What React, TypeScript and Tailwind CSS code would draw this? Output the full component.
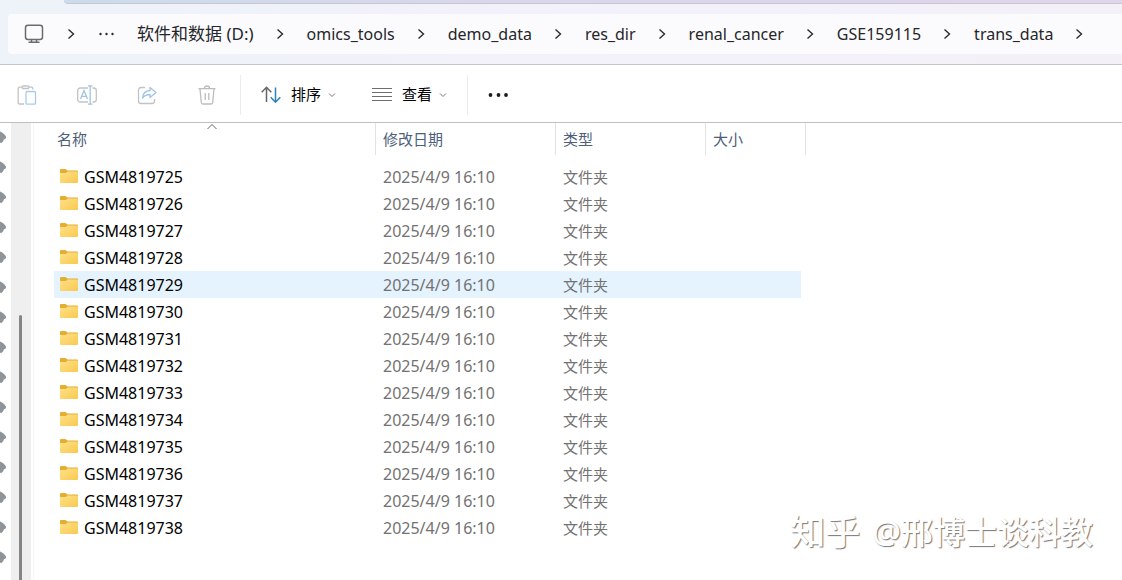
import { useState } from 'react';

const crumbs = ['软件和数据 (D:)', 'omics_tools', 'demo_data', 'res_dir', 'renal_cancer', 'GSE159115', 'trans_data'];

const folders = Array.from({ length: 14 }, (_, i) => ({
  name: `GSM${4819725 + i}`,
  date: '2025/4/9 16:10',
  type: '文件夹',
}));

const pins = Array.from({ length: 15 }, (_, i) => i);

function Chevron() {
  return (
    <svg className="h-3 w-2 shrink-0" viewBox="0 0 8 12" fill="none" stroke="#2b2b2e" strokeWidth="1.4">
      <path d="M1.5 1.5 6.5 6l-5 4.5" />
    </svg>
  );
}

function SmallChevron() {
  return (
    <svg className="h-2 w-2" viewBox="0 0 8 8" fill="none" stroke="#7a7a7a" strokeWidth="1">
      <path d="M1 2.5 4 5.5l3-3" />
    </svg>
  );
}

function PcIcon() {
  return (
    <svg className="h-5 w-5" viewBox="0 0 20 20" fill="none" stroke="#6a6c70" strokeWidth="1.5">
      <rect x="1.5" y="1.2" width="17" height="14.3" rx="2.5" />
      <path d="M7.5 15.5v2.7M12.5 15.5v2.7M4.5 18.2h11" />
    </svg>
  );
}

function PasteIcon() {
  return (
    <svg className="h-5 w-5" viewBox="0 0 20 20" fill="none" strokeWidth="1.3">
      <path d="M7 19H2.5a1.3 1.3 0 0 1-1.3-1.3V3.500a1.300 1.300 0 0 1 1.300-1.300H5M12 2.200h2.500a1.300 1.300 0 0 1 1.300 1.300V4.500" stroke="#c3c3c3" />
      <rect x="5" y="1" width="7" height="2.500" rx="1.200" stroke="#c3c3c3" />
      <rect x="9" y="6.500" width="9.500" height="12.700" rx="1.300" stroke="#a9cbe6" />
    </svg>
  );
}

function RenameIcon() {
  return (
    <svg className="h-5 w-5" viewBox="0 0 20 20" fill="none" strokeWidth="1.3">
      <path d="M11 17H3.200A2.500 2.500 0 0 1 .7 14.500v-9A2.500 2.500 0 0 1 3.200 3H11M15.500 3h1.300a2.500 2.500 0 0 1 2.500 2.500v9a2.500 2.500 0 0 1-2.500 2.500h-1.300" stroke="#c3c3c3" />
      <path d="m3.500 14 3.500-8.500L10.500 14M4.700 11.300h4.600M13.200.8v18.400M11 .8h4.400M11 19.200h4.400" stroke="#a0c4e2" />
    </svg>
  );
}

function ShareIcon() {
  return (
    <svg className="h-5 w-5" viewBox="0 0 20 20" fill="none" strokeWidth="1.3" strokeLinejoin="round">
      <path d="M8 2.500H4A2.500 2.500 0 0 0 1.500 5v11A2.500 2.500 0 0 0 4 18.500h11a2.500 2.500 0 0 0 2.500-2.500v-2" stroke="#c3c3c3" />
      <path d="M13 2.500 19 7.500l-6 5v-3c-3.500 0-5.500 1-7.500 3.500.3-4.500 3-7.200 7.500-7.500z" stroke="#a0c4e2" />
    </svg>
  );
}

function TrashIcon() {
  return (
    <svg className="h-5 w-5" viewBox="0 0 20 20" fill="none" stroke="#bdbdbd" strokeWidth="1.3">
      <path d="M1.500 3.700h17M7.500 3.500a2.500 2.500 0 0 1 5 0M3 4l1.300 13.500a1.700 1.700 0 0 0 1.700 1.500h8a1.700 1.700 0 0 0 1.700-1.500L17 4M8.200 8v7M11.800 8v7" />
    </svg>
  );
}

function SortIcon() {
  return (
    <svg className="h-5 w-5" viewBox="0 0 20 20" fill="none" strokeWidth="1.5">
      <path d="M5.500 17V2.500M.7 7.300l4.800-5 4.800 5" stroke="#666" />
      <path d="M14.500 2.500V17M9.700 12.200l4.800 5 4.800-5" stroke="#2b83bd" />
    </svg>
  );
}

function ViewIcon() {
  return (
    <svg className="h-5 w-5" viewBox="0 0 20 20" fill="none" stroke="#6f6f6f" strokeWidth="1.2">
      <path d="M0 3.500h20M0 7.500h20M0 11.500h20M0 15.500h20" />
    </svg>
  );
}

function FolderIcon() {
  return (
    <svg className="h-4 w-[18px] shrink-0" viewBox="0 0 18 16">
      <defs>
        <linearGradient id="folder" x1="0" y1="0" x2="1" y2="1">
          <stop offset="0" stopColor="#ffe18a" />
          <stop offset="1" stopColor="#f8c94e" />
        </linearGradient>
      </defs>
      <path d="M0 1a1 1 0 0 1 1-1h4.500L7.500 1.500H17a1 1 0 0 1 1 1V8H0z" fill="#e4ae33" />
      <path d="M0 4h6l1.500-1.500H17a1 1 0 0 1 1 1V13a1 1 0 0 1-1 1H1a1 1 0 0 1-1-1z" fill="url(#folder)" />
    </svg>
  );
}

function PinIcon() {
  return (
    <svg className="h-3.5 w-1.5" viewBox="0 0 6 14" fill="#8f9499">
      <path d="M0 .5C2 1 4.500 3 6 5.500L5.800 7.500 4 8.200 3 10.500 1 12.200 0 11.500z" />
    </svg>
  );
}

export default function App() {
  const [selected, setSelected] = useState('GSM4819729');

  return (
    <div className="relative flex h-screen flex-col overflow-hidden bg-white font-['Noto_Sans','Noto_Sans_CJK_SC',sans-serif] text-base text-black">
      {/* Title strip and address bar */}
      <header className="shrink-0 border-b border-[#c4c5cc] bg-linear-to-r from-[#edf3f9] via-[#f3f1f9] to-[#f3f0f8]">
        <div className="ml-16 h-1 rounded-bl border-b border-[#c8c6d6] bg-linear-to-r from-[#cbdcea] via-[#dcd6ea] to-[#ded6ea]" />
        <div className="py-2.5 pl-2">
          <nav className="flex h-10 items-center gap-[23px] rounded-l bg-[#fbfbfe] pl-4 whitespace-nowrap text-[#262629]">
            <button aria-label="PC"><PcIcon /></button>
            <Chevron />
            <button aria-label="More locations">
              <svg className="h-4 w-4" viewBox="0 0 16 16" fill="#2b2b2e">
                <circle cx="2.500" cy="8" r="1.200" />
                <circle cx="8.500" cy="8" r="1.200" />
                <circle cx="14.500" cy="8" r="1.200" />
              </svg>
            </button>
            {crumbs.map((crumb, i) => (
              <div key={crumb} className="flex items-center gap-[22px]">
                <button className={i === 0 ? 'text-[17px]' : 'text-base'}>{crumb}</button>
                <Chevron />
              </div>
            ))}
          </nav>
        </div>
      </header>

      {/* Toolbar */}
      <div className="flex h-[58px] shrink-0 items-center border-b border-[#bfc0c2] pt-0.5 pl-[17px] text-[15px]">
        <div className="flex gap-10 pr-[23px]">
          <button aria-label="Paste" disabled><PasteIcon /></button>
          <button aria-label="Rename" disabled><RenameIcon /></button>
          <button aria-label="Share" disabled><ShareIcon /></button>
          <button aria-label="Delete" disabled><TrashIcon /></button>
        </div>
        <div className="flex h-10 items-center gap-9 border-x border-[#ececec] px-5">
          <button className="flex items-center gap-2.5">
            <SortIcon />
            <span className="flex items-center gap-[7px]">排序<SmallChevron /></span>
          </button>
          <button className="flex items-center gap-2.5">
            <ViewIcon />
            <span className="flex items-center gap-[7px]">查看<SmallChevron /></span>
          </button>
        </div>
        <button aria-label="See more" className="ml-5">
          <svg className="h-5 w-5" viewBox="0 0 20 20" fill="#1b1b1b">
            <circle cx="2.500" cy="10" r="1.900" />
            <circle cx="10.500" cy="10" r="1.900" />
            <circle cx="18" cy="10" r="1.900" />
          </svg>
        </button>
      </div>

      <div className="flex min-h-0 flex-1">
        {/* Navigation pane edge */}
        <aside className="flex shrink-0 overflow-hidden border-r border-[#f5f5f5] pr-0.5">
          <div className="flex w-[11px] flex-col gap-4 pt-2">
            {pins.map((pin) => (
              <PinIcon key={pin} />
            ))}
          </div>
          <div className="flex w-5 flex-col bg-[#efefef] pl-2">
            <div className="h-[42%] shrink-0" />
            <div className="w-[3px] flex-1 rounded-t bg-[#858585]" />
          </div>
        </aside>

        <main className="min-w-0 flex-1 overflow-hidden pl-5">
          <table className="w-[752px] table-fixed border-collapse text-left">
            <colgroup>
              <col className="w-[322px]" />
              <col className="w-[180px]" />
              <col className="w-[150px]" />
              <col className="w-[95px]" />
              <col className="w-[5px]" />
            </colgroup>
            <thead className="text-[15px] text-[#4c607a]">
              <tr className="h-10 align-top">
                <th className="relative p-0 font-normal">
                  <div className="h-8 border-r border-[#e2e2e2] pl-[3px] leading-8">名称</div>
                  <svg className="absolute top-0 left-[153px] h-2 w-2.5" viewBox="0 0 10 8" fill="none" stroke="#666">
                    <path d="m.5 6 4.500-4.500L9.500 6" />
                  </svg>
                </th>
                <th className="p-0 font-normal"><div className="h-8 border-r border-[#e2e2e2] pl-[7px] leading-8">修改日期</div></th>
                <th className="p-0 font-normal"><div className="h-8 border-r border-[#e2e2e2] pl-[7px] leading-8">类型</div></th>
                <th colSpan={2} className="p-0 font-normal"><div className="h-8 border-r border-[#e2e2e2] pl-[7px] leading-8">大小</div></th>
              </tr>
            </thead>
            <tbody>
              {folders.map((folder) => {
                const bg = folder.name === selected ? 'bg-[#e5f3ff]' : '';
                return (
                  <tr key={folder.name} className="h-[27px]" onClick={() => setSelected(folder.name)}>
                    <td className={`p-0 pl-1.5 ${bg}`}>
                      <div className="flex items-center gap-1.5 leading-6">
                        <FolderIcon />
                        {folder.name}
                      </div>
                    </td>
                    <td className={`p-0 pl-[7px] leading-6 text-[#727272] ${bg}`}>{folder.date}</td>
                    <td className={`p-0 pl-[7px] text-[15px] leading-6 text-[#727272] ${bg}`}>{folder.type}</td>
                    <td className={`p-0 ${bg}`} />
                    <td className="p-0" />
                  </tr>
                );
              })}
            </tbody>
          </table>
        </main>
      </div>

      {/* Watermark */}
      <div className="pointer-events-none absolute right-[29px] bottom-[22px] flex items-center gap-3 text-[32px] font-medium whitespace-nowrap text-white [text-shadow:1px_1px_1px_#777]">
        <span className="text-[35px]">知乎</span>
        <span>@邢博士谈科教</span>
      </div>
    </div>
  );
}
